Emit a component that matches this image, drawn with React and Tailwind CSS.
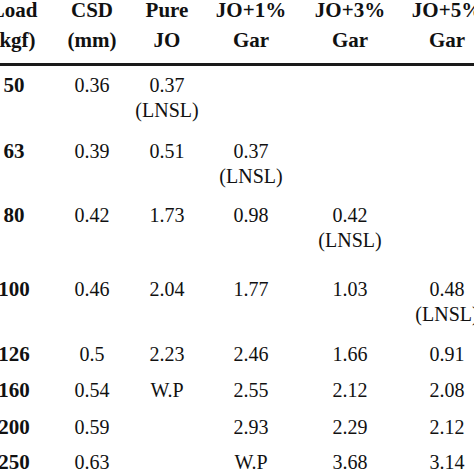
import React from "react";

const cols = ["w-[78px]", "w-[78px]", "w-[72px]", "w-[96px]", "w-[102px]", "w-[92px]"];

const header = [
  ["Load", "(kgf)"],
  ["CSD", "(mm)"],
  ["Pure", "JO"],
  ["JO+1%", "Gar"],
  ["JO+3%", "Gar"],
  ["JO+5%", "Gar"],
];

// each cell is a list of lines; h = row height in px
const rows = [
  { h: "h-[66px]", cells: [["50"], ["0.36"], ["0.37", "(LNSL)"], [], [], []] },
  { h: "h-[64px]", cells: [["63"], ["0.39"], ["0.51"], ["0.37", "(LNSL)"], [], []] },
  { h: "h-[74px]", cells: [["80"], ["0.42"], ["1.73"], ["0.98"], ["0.42", "(LNSL)"], []] },
  { h: "h-[65px]", cells: [["100"], ["0.46"], ["2.04"], ["1.77"], ["1.03"], ["0.48", "(LNSL)"]] },
  { h: "h-[36px]", cells: [["126"], ["0.5"], ["2.23"], ["2.46"], ["1.66"], ["0.91"]] },
  { h: "h-[37px]", cells: [["160"], ["0.54"], ["W.P"], ["2.55"], ["2.12"], ["2.08"]] },
  { h: "h-[35px]", cells: [["200"], ["0.59"], [], ["2.93"], ["2.29"], ["2.12"]] },
  { h: "h-[36px]", cells: [["250"], ["0.63"], [], ["W.P"], ["3.68"], ["3.14"]] },
];

export default function App() {
  return (
    <div
      className="w-[474px] h-[474px] overflow-hidden bg-white text-[#111]"
      style={{ fontFamily: '"Liberation Serif", "Times New Roman", serif' }}
    >
      <div className="ml-[-25px] w-[518px]">
        {/* header */}
        <div className="flex pb-[8px] font-bold text-[21px]">
          {header.map(([a, b], i) => (
            <div key={i} className={`${cols[i]} shrink-0 flex flex-col items-center whitespace-nowrap`}>
              <span className="leading-[20px]">{a}</span>
              <span className="leading-[30px] mt-[5px]">{b}</span>
            </div>
          ))}
        </div>
        <div className="h-[3px] bg-[#1a1a1a]" />

        {/* body */}
        <div className="pt-[7px] text-[20px] leading-[25px]">
          {rows.map((row, r) => (
            <div key={r} className={`flex ${row.h}`}>
              {row.cells.map((lines, i) => (
                <div
                  key={i}
                  className={`${cols[i]} shrink-0 flex flex-col items-center whitespace-nowrap ${i === 0 ? "font-bold text-[21px]" : ""}`}
                >
                  {lines.map((l) => (
                    <span key={l}>{l}</span>
                  ))}
                </div>
              ))}
            </div>
          ))}
        </div>
      </div>
    </div>
  );
}
